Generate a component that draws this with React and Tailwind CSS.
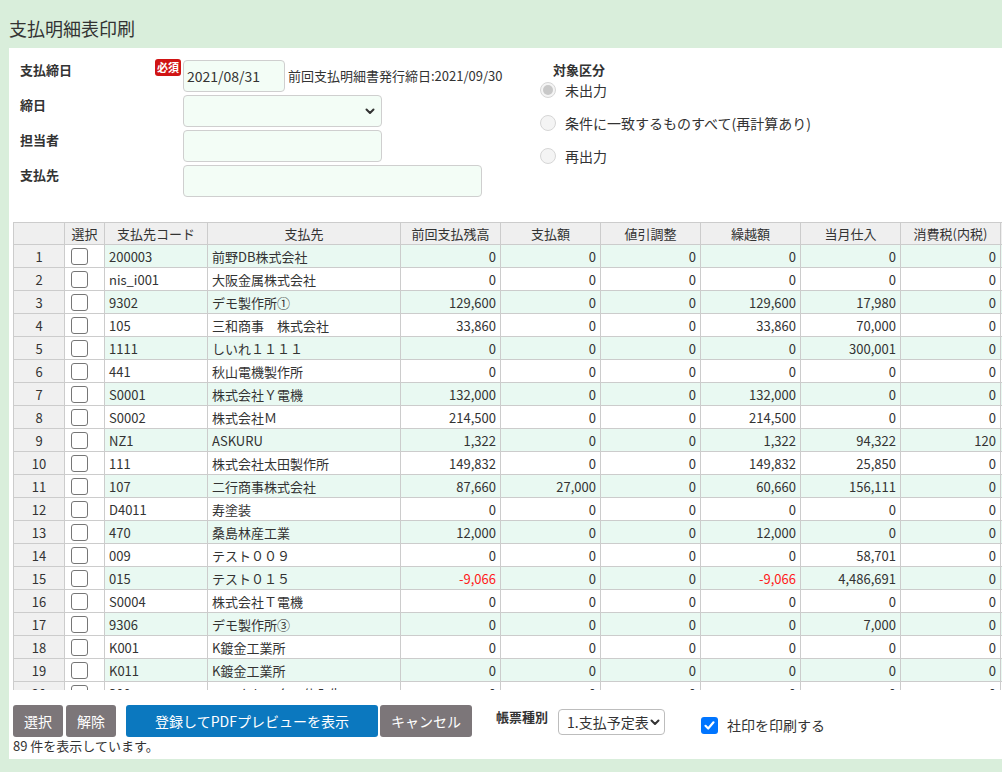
import React, { useState } from 'react';

const rows = [
  ['200003', '前野DB株式会社', '0', '0', '0', '0', '0', '0'],
  ['nis_i001', '大阪金属株式会社', '0', '0', '0', '0', '0', '0'],
  ['9302', 'デモ製作所①', '129,600', '0', '0', '129,600', '17,980', '0'],
  ['105', '三和商事　株式会社', '33,860', '0', '0', '33,860', '70,000', '0'],
  ['1111', 'しいれ１１１１', '0', '0', '0', '0', '300,001', '0'],
  ['441', '秋山電機製作所', '0', '0', '0', '0', '0', '0'],
  ['S0001', '株式会社Ｙ電機', '132,000', '0', '0', '132,000', '0', '0'],
  ['S0002', '株式会社Ｍ', '214,500', '0', '0', '214,500', '0', '0'],
  ['NZ1', 'ASKURU', '1,322', '0', '0', '1,322', '94,322', '120'],
  ['111', '株式会社太田製作所', '149,832', '0', '0', '149,832', '25,850', '0'],
  ['107', '二行商事株式会社', '87,660', '27,000', '0', '60,660', '156,111', '0'],
  ['D4011', '寿塗装', '0', '0', '0', '0', '0', '0'],
  ['470', '桑島林産工業', '12,000', '0', '0', '12,000', '0', '0'],
  ['009', 'テスト００９', '0', '0', '0', '0', '58,701', '0'],
  ['015', 'テスト０１５', '-9,066', '0', '0', '-9,066', '4,486,691', '0'],
  ['S0004', '株式会社Ｔ電機', '0', '0', '0', '0', '0', '0'],
  ['9306', 'デモ製作所③', '0', '0', '0', '0', '7,000', '0'],
  ['K001', 'K鍍金工業所', '0', '0', '0', '0', '0', '0'],
  ['K011', 'K鍍金工業所', '0', '0', '0', '0', '0', '0'],
  ['300', 'ワークセンター仕入先', '0', '0', '0', '0', '0', '0'],
];

const headers = ['前回支払残高', '支払額', '値引調整', '繰越額', '当月仕入', '消費税(内税)'];

const Chevron = () => (
  <svg width="10" height="7" viewBox="0 0 10 7" fill="none">
    <path d="M1.5 1.5 L5 5 L8.5 1.5" stroke="#333" strokeWidth="2" strokeLinecap="round" strokeLinejoin="round" />
  </svg>
);

const Radio = ({ checked, label }) => (
  <div className="flex items-center h-[20px]">
    <span className="w-[16px] h-[16px] rounded-full border border-[#d6d6d6] bg-[#f4f4f4] flex items-center justify-center">
      {checked && <span className="w-[10px] h-[10px] rounded-full bg-[#c8c8c8]" />}
    </span>
    <span className="ml-[9px] text-[14px] text-[#333]">{label}</span>
  </div>
);

const Box = () => (
  <span className="block w-[17px] h-[17px] rounded-[3px] border border-[#767676] bg-white" />
);

export default function App() {
  const [stamp, setStamp] = useState(true);

  return (
    <div
      className="w-[1002px] h-[772px] overflow-hidden bg-[#d9eedb] text-[#333]"
      style={{ fontFamily: '"Noto Sans CJK JP", "Noto Sans", sans-serif' }}
    >
      {/* title */}
      <div className="h-[48px] pt-[9px] pl-[9px] flex items-center text-[18px]">支払明細表印刷</div>

      <div className="ml-[9px] h-[711px] bg-white overflow-hidden">
        {/* search form */}
        <div className="flex pt-[12px]">
          <div className="w-[531px] flex flex-col gap-[3px]">
            <div className="flex h-[32px]">
              <div className="w-[146px] pl-[11px] text-[13px] font-bold leading-[20px]">支払締日</div>
              <span className="mt-[-1px] h-[17px] w-[26px] rounded-[3px] bg-[#d01414] text-white text-[11px] font-bold leading-[17px] text-center">必須</span>
              <div className="ml-[2px] w-[102px] h-[32px] rounded-[4px] border border-[#cfcfcf] bg-[#f3fdf6] px-[3px] flex items-center text-[14px]">2021/08/31</div>
              <div className="ml-[3px] flex items-center text-[13px]">前回支払明細書発行締日:2021/09/30</div>
            </div>
            <div className="flex h-[32px]">
              <div className="w-[174px] pl-[11px] text-[13px] font-bold leading-[20px]">締日</div>
              <div className="w-[199px] h-[32px] rounded-[4px] border border-[#cfcfcf] bg-[#f3fdf6] flex items-center justify-end pr-[6px]">
                <Chevron />
              </div>
            </div>
            <div className="flex h-[32px]">
              <div className="w-[174px] pl-[11px] text-[13px] font-bold leading-[20px]">担当者</div>
              <div className="w-[199px] h-[32px] rounded-[4px] border border-[#cfcfcf] bg-[#f3fdf6]" />
            </div>
            <div className="flex h-[32px]">
              <div className="w-[174px] pl-[11px] text-[13px] font-bold leading-[20px]">支払先</div>
              <div className="w-[299px] h-[32px] rounded-[4px] border border-[#cfcfcf] bg-[#f3fdf6]" />
            </div>
          </div>
          <div className="flex flex-col">
            <div className="pl-[13px] text-[13px] font-bold leading-[20px]">対象区分</div>
            <div className="flex flex-col gap-[13px]">
              <Radio checked label="未出力" />
              <Radio label="条件に一致するものすべて(再計算あり)" />
              <Radio label="再出力" />
            </div>
          </div>
        </div>

        {/* result grid */}
        <div className="mt-[25px] ml-[4px] h-[468px] overflow-hidden">
          <table className="border-collapse table-fixed w-[1087px] text-[13px]">
            <colgroup>
              <col className="w-[51px]" />
              <col className="w-[40px]" />
              <col className="w-[103px]" />
              <col className="w-[193px]" />
              {headers.map((h) => (
                <col key={h} className="w-[100px]" />
              ))}
              <col className="w-[100px]" />
            </colgroup>
            <thead>
              <tr className="h-[22px] bg-[#efefef]">
                <th className="border border-[#cccccc] font-normal p-0 leading-[20px]"></th>
                <th className="border border-[#cccccc] font-normal p-0 leading-[20px]">選択</th>
                <th className="border border-[#cccccc] font-normal p-0 leading-[20px]">支払先コード</th>
                <th className="border border-[#cccccc] font-normal p-0 leading-[20px]">支払先</th>
                {headers.map((h) => (
                  <th key={h} className="border border-[#cccccc] font-normal p-0 leading-[20px]">{h}</th>
                ))}
                <th className="border border-[#cccccc] font-normal p-0 leading-[20px]"></th>
              </tr>
            </thead>
            <tbody>
              {rows.map((r, i) => {
                const odd = i % 2 === 0;
                const bg = odd ? 'bg-[#e9f9f2]' : 'bg-white';
                return (
                  <tr key={i} className="h-[23px]">
                    <td className="border border-[#cccccc] bg-[#f0f0f0] text-center p-0 leading-[21px]">{i + 1}</td>
                    <td className="border border-[#cccccc] bg-white p-0 pl-[6px]">
                      <Box />
                    </td>
                    <td className={`border border-[#cccccc] ${bg} px-[4px] py-0 leading-[21px] whitespace-nowrap overflow-hidden`}>{r[0]}</td>
                    <td className={`border border-[#cccccc] ${bg} px-[4px] py-0 leading-[21px] whitespace-nowrap overflow-hidden`}>{r[1]}</td>
                    {r.slice(2).map((v, j) => (
                      <td
                        key={j}
                        className={`border border-[#cccccc] ${bg} px-[4px] py-0 leading-[21px] text-right ${v.startsWith('-') ? 'text-[#ff1a1a]' : ''}`}
                      >
                        {v}
                      </td>
                    ))}
                    <td className={`border border-[#cccccc] ${bg} p-0`}></td>
                  </tr>
                );
              })}
            </tbody>
          </table>
        </div>

        {/* actions */}
        <div className="mt-[15px] ml-[4px] flex items-start">
          <button className="w-[50px] h-[32px] rounded-[3px] bg-[#7c7679] text-white text-[14px]">選択</button>
          <button className="ml-[3px] w-[50px] h-[32px] rounded-[3px] bg-[#7c7679] text-white text-[14px]">解除</button>
          <button className="ml-[10px] w-[252px] h-[32px] rounded-[3px] bg-[#0b78bf] text-white text-[14px]">登録してPDFプレビューを表示</button>
          <button className="ml-[2px] w-[92px] h-[32px] rounded-[3px] bg-[#7c7679] text-white text-[14px]">キャンセル</button>
          <div className="ml-[24px] mt-[2px] text-[13px] font-bold leading-[20px]">帳票種別</div>
          <div className="ml-[10px] mt-[4px] w-[107px] h-[26px] rounded-[4px] border border-[#bdbdbd] bg-white flex items-center justify-between pl-[8px] pr-[4px] text-[14px] whitespace-nowrap">
            <span>1.支払予定表</span>
            <Chevron />
          </div>
          <label className="ml-[36px] mt-[10px] flex items-center cursor-pointer" onClick={() => setStamp(!stamp)}>
            <span className={`w-[17px] h-[17px] rounded-[3px] flex items-center justify-center ${stamp ? 'bg-[#0075ff]' : 'border border-[#767676] bg-white'}`}>
              {stamp && (
                <svg width="13" height="13" viewBox="0 0 13 13" fill="none">
                  <path d="M2.5 6.8 L5.2 9.5 L10.5 3.3" stroke="#fff" strokeWidth="2.2" strokeLinecap="round" strokeLinejoin="round" />
                </svg>
              )}
            </span>
            <span className="ml-[9px] text-[14px]">社印を印刷する</span>
          </label>
        </div>
        <div className="ml-[4px] text-[13px] leading-[18px]">89 件を表示しています。</div>
      </div>
    </div>
  );
}
